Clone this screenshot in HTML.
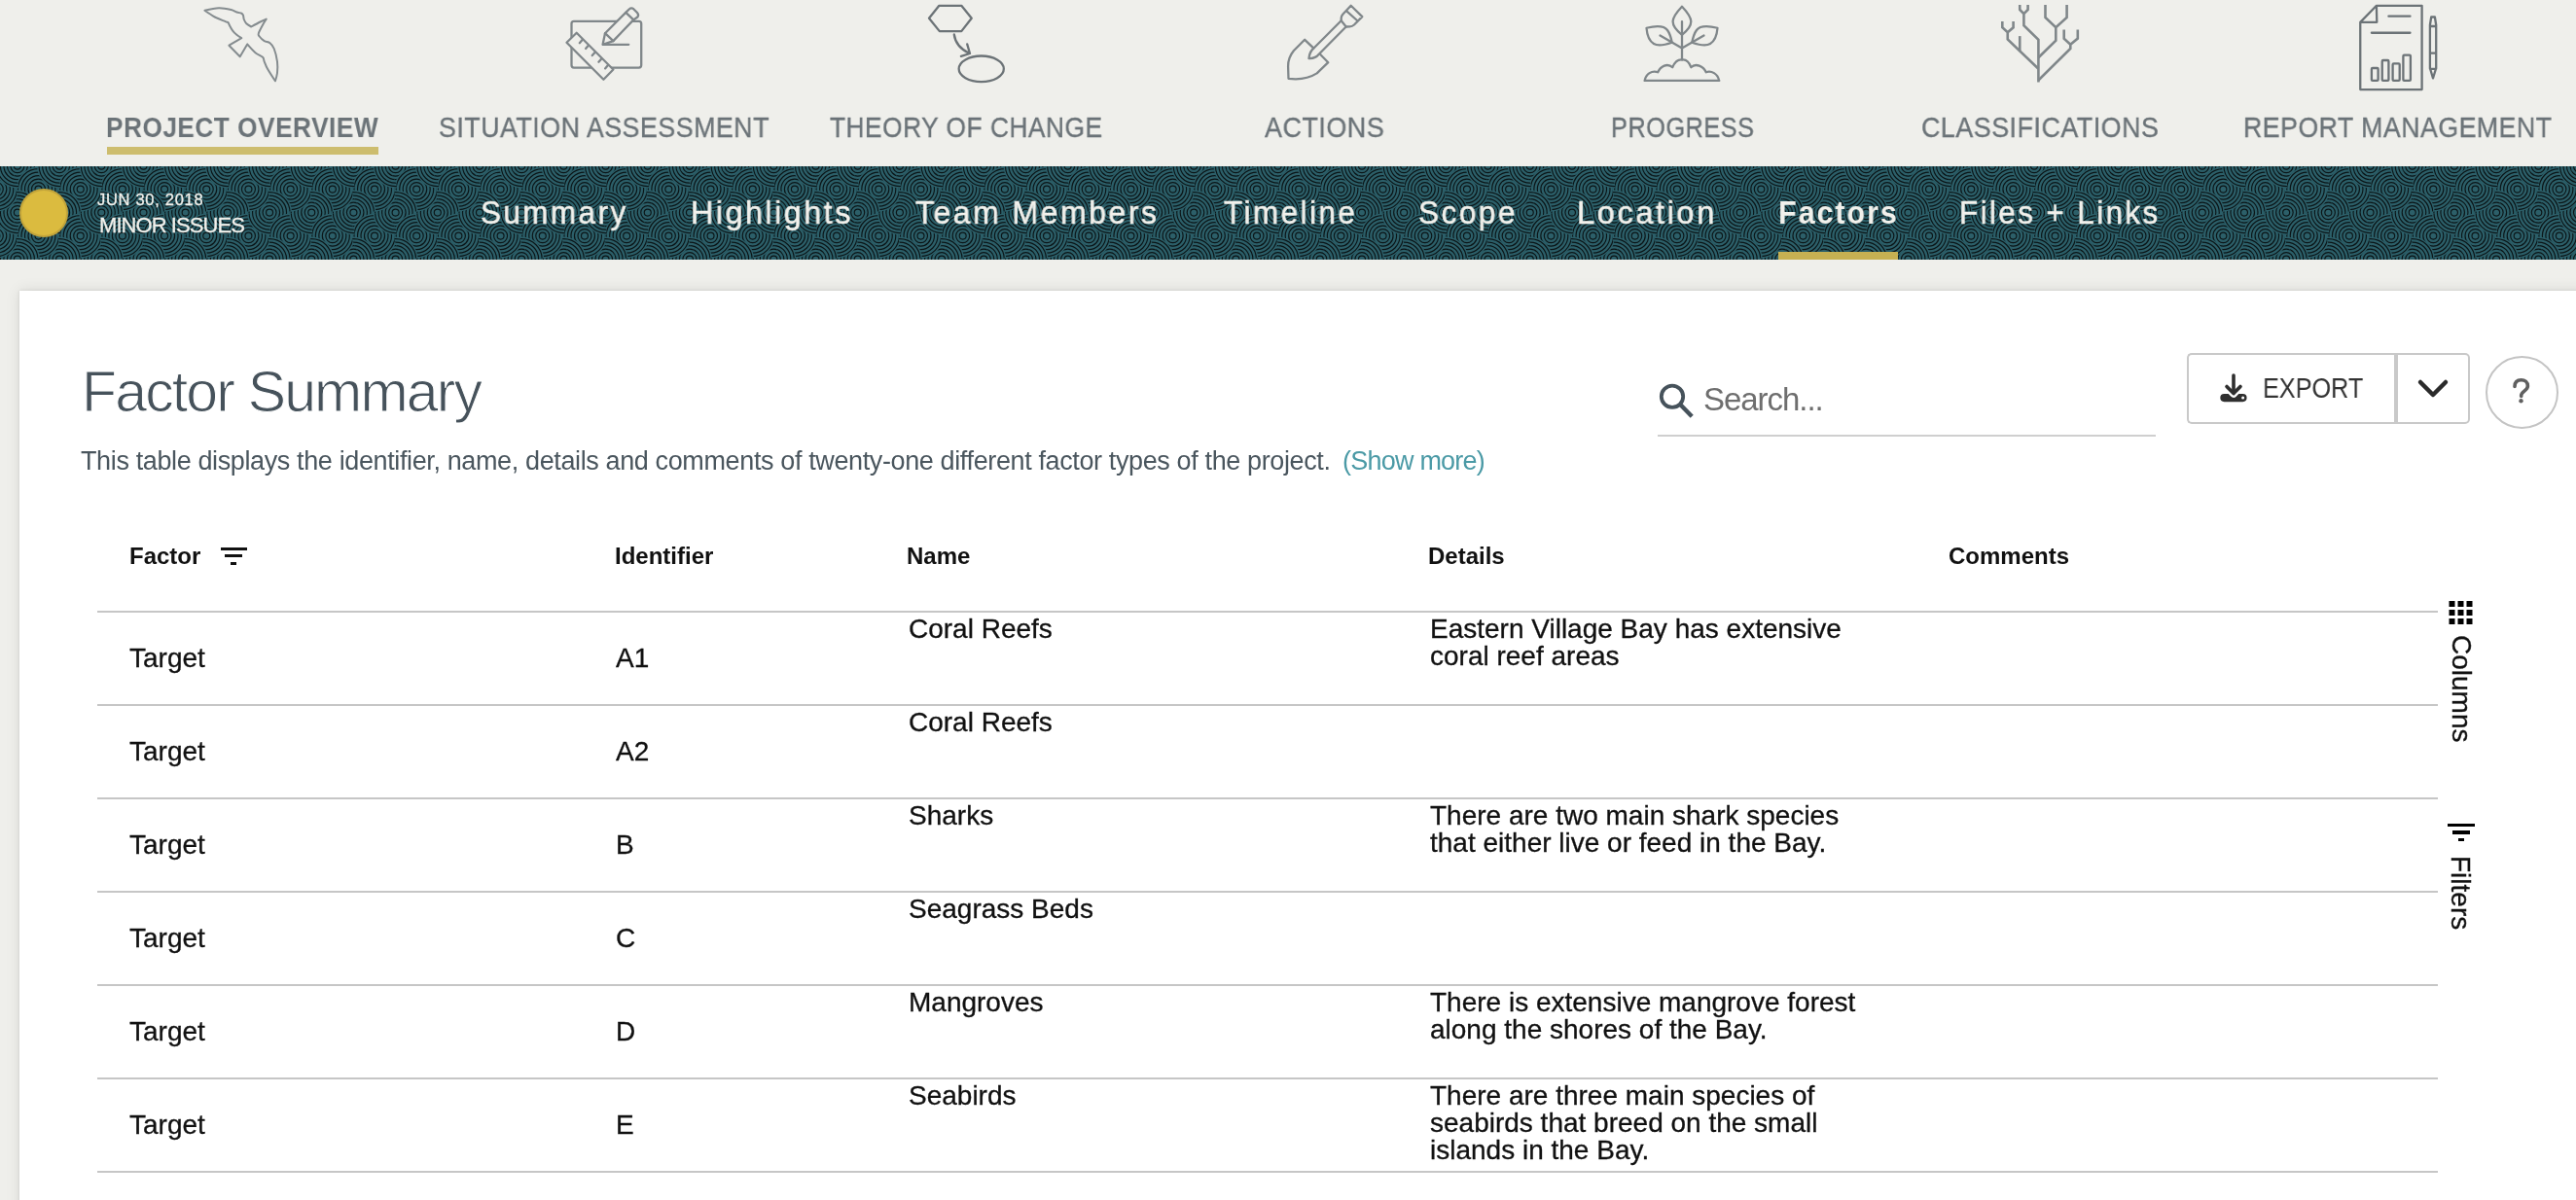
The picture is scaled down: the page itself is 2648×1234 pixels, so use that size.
<!DOCTYPE html>
<html><head><meta charset="utf-8">
<style>
html,body{margin:0;padding:0;}
body{width:2648px;height:1234px;overflow:hidden;position:relative;background:#efefeb;font-family:"Liberation Sans",sans-serif;}
.a{will-change:transform;}
.a{position:absolute;white-space:nowrap;}
.tl{font-size:29px;line-height:29px;color:#6b7378;top:116.5px;-webkit-text-stroke:0.35px #6b7378;}
.nv{font-size:33px;line-height:33px;color:#f2f1ec;top:201.7px;letter-spacing:2.5px;-webkit-text-stroke:0.5px #f2f1ec;transform-origin:0 0;}
.card{position:absolute;left:20px;top:299px;width:2700px;height:1000px;background:#fff;box-shadow:0 0 14px rgba(0,0,0,0.10), 0 0 3px rgba(0,0,0,0.10);}
.hd{font-size:24px;line-height:24px;font-weight:bold;color:#111;top:560px;}
.c{font-size:28px;line-height:28px;color:#111;-webkit-text-stroke:0.3px #111;}
.ln{position:absolute;left:100px;width:2406px;height:2px;background:#c6c6c6;}
</style></head><body>

<!-- top icons -->
<svg class="a" style="left:0;top:0" width="2648" height="100" viewBox="0 0 2648 100" fill="none" stroke="#80878a" stroke-width="2.3" stroke-linejoin="round" stroke-linecap="round">
<path stroke-width="2" stroke="#858c8f" d="M210.4,10.8 C210.40,10.80 220.48,8.43 225,8.3 C229.52,8.17 234.45,9.30 237.5,10 C240.55,10.70 241.50,11.88 243.3,12.5 C245.10,13.12 247.18,13.20 248.3,13.75 C249.42,14.30 249.58,14.76 250,15.8 C250.42,16.84 250.25,18.60 250.8,20 C251.35,21.40 252.05,22.95 253.3,24.2 C254.55,25.45 258.30,27.50 258.3,27.5 C258.30,27.50 264.93,23.82 267.5,22.5 C270.07,21.18 273.75,19.60 273.75,19.6 C273.75,19.60 272.12,21.77 270.8,24.2 C269.48,26.63 266.48,31.98 265.8,34.2 C265.12,36.42 265.72,36.18 266.7,37.5 C267.68,38.82 269.90,40.98 271.7,42.1 C273.50,43.22 275.83,42.88 277.5,44.2 C279.17,45.52 280.45,46.82 281.7,50 C282.95,53.18 284.45,59.13 285,63.3 C285.55,67.47 285.35,71.67 285,75 C284.65,78.33 282.90,83.30 282.9,83.3 C282.90,83.30 276.87,74.13 275,70.8 C273.13,67.47 272.53,65.31 271.7,63.3 C270.87,61.29 271.53,60.27 270,58.75 C268.47,57.23 265.13,56.43 262.5,54.2 C259.87,51.98 254.20,45.40 254.2,45.4 C254.20,45.40 246.70,58.30 246.7,58.3 C246.70,58.30 235.40,46.70 235.4,46.7 C235.40,46.70 248.30,39.20 248.3,39.2 C248.30,39.20 244.82,37.05 243.3,35.8 C241.78,34.55 240.45,33.37 239.2,31.7 C237.95,30.03 236.57,27.20 235.8,25.8 C235.03,24.40 235.28,23.92 234.6,23.3 C233.92,22.68 234.00,23.07 231.7,22.1 C229.40,21.13 224.35,19.38 220.8,17.5 C217.25,15.62 210.40,10.80 210.4,10.8 Z"/>
<rect x="587.5" y="21.8" width="71.7" height="47.8" rx="2.5"/>
<path d="M582.5,43.75 L592.7,33.75 L630.4,71.5 L620.4,81.7 Z" fill="#efefeb"/>
<path d="M598.75,40.8 L595.8,44.2 M604.6,47.1 L602.1,50 M611.7,53.75 L608.75,57.1 M618.3,60.4 L615.4,63.75 M625,67.1 L622.1,70.4"/>
<path d="M619.6,45.8 L622,34.2 L643.3,12.9 L646.7,9.5 Q649,7.5 651.25,9.2 L655,13 Q657,15.5 655.4,17.5 L651.25,20.4 L630.4,42.1 Z" fill="#efefeb"/>
<path d="M622,34.2 L630.4,42.1 M643.3,12.9 L651.25,20.4 M620,45.8 L646.25,45.8"/>
<g stroke="#6c7377">
<path d="M955,18.75 L965.4,5.8 L988.3,5.8 L998.75,18.75 L988.3,32.1 L965.8,32.1 Z"/>
<path d="M980.8,35.5 Q982.5,48.3 996.7,55 M994.2,45.4 L997,55 L987.9,57.9"/>
<ellipse cx="1008.75" cy="70.8" rx="23.1" ry="13.3"/>
</g>
<path d="M1349.9,49.2 L1341.2,40.8 L1330,52 C1325,58 1324,63 1324.1,68.3 L1324.5,80.8 C1338,82.5 1348,79 1353.7,75.4 L1365.3,64.2 L1357,55.8"/>
<path d="M1351,49 L1378.7,21.3 M1383.7,27.5 L1355.75,55.8 M1351,49 Q1346,53 1345.5,60 Q1352,60.5 1355.75,55.8"/>
<path d="M1378.7,21.3 L1378.7,18.5 Q1378.7,16.5 1380.5,14.5 L1388.7,5.8 L1400.3,17.1 L1392,25.5 Q1390,27.3 1387.5,27.4 L1383.7,27.5 Z M1384.5,11.7 L1395.3,21.25"/>
<path d="M1729,6.7 C1724,12 1719.6,17 1719.6,22.1 C1719.6,28 1724,32 1729,35.8 C1734,32 1738.3,28 1738.3,22.1 C1738.3,17 1734,12 1729,6.7 Z"/>
<path d="M1729,22.1 L1729,61.25 M1706.5,36.5 L1729,49.6 L1751.5,36.5"/>
<path d="M1692.5,28.75 C1700,27 1710,25.5 1714,31 C1717,35 1718,40 1718.75,43.75 C1712,46 1705,48 1700,45 C1695,42 1693,35 1692.5,28.75 Z"/>
<path d="M1765.5,28.75 C1758,27 1748,25.5 1744,31 C1741,35 1740,40 1739.25,43.75 C1746,46 1753,48 1758,45 C1763,42 1765,35 1765.5,28.75 Z"/>
<path d="M1690.6,82.9 L1767.3,82.9 M1690.6,82.9 C1692,76 1698,72 1704.2,74.2 C1707,68 1714,64.5 1719.2,69.2 C1722,63 1726,61 1729.2,61.5 C1733,61 1736,63 1738.3,69.2 C1743,64.5 1751,68 1753.75,74.2 C1759,72 1766,76 1767.1,82.9"/>
<g stroke-width="2.6" stroke-linecap="butt" stroke-linejoin="miter">
<path d="M2095.4,84.6 L2095.4,40.8 L2080.4,26.25 L2080.4,14.2 M2076.25,5 L2076.25,10 L2080.4,14.2 L2084.6,10 L2084.6,5"/>
<path d="M2095.4,70.8 L2063.75,40.4 L2063.75,33.3 M2058.3,22.1 L2058.3,28.3 L2063.75,33.3 L2069.6,28.3 L2069.6,22.1"/>
<path d="M2076.25,52 L2076.25,37.1"/>
<path d="M2095.4,59.2 L2113.3,41.7 L2113.3,28.3 M2102.5,5 L2102.5,17.9 L2113.3,28.3 L2124.6,17.9 L2124.6,5"/>
<path d="M2095.4,82.5 L2128.3,50 L2128.3,45.8 M2121.7,30.4 L2121.7,39.6 L2128.3,45.8 L2135.8,39.6 L2135.8,30.4"/>
</g>
<g stroke="#6c7377">
<path d="M2426.25,22.9 L2442.9,5.8 L2489.6,5.8 L2489.6,92.1 L2426.25,92.1 Z M2442.9,5.8 L2443.3,22.9 L2426.25,22.9"/>
<path d="M2455.4,16.7 L2477.5,16.7 M2437.9,33.75 L2477.5,33.75"/>
<rect x="2437.9" y="70" width="6.7" height="12.9" rx="1"/>
<rect x="2448.75" y="62" width="6.65" height="20.9" rx="1"/>
<rect x="2459.6" y="65.4" width="7.1" height="17.5" rx="1"/>
<rect x="2470.4" y="56.7" width="7.5" height="26.2" rx="1"/>
<path d="M2497.9,25.8 L2499.2,17.5 L2502.9,17.5 L2504.2,25.8 L2504.2,70 L2501,80.4 L2497.9,70 Z M2497.9,27 L2504.2,27 M2497.9,54.6 L2504.2,54.6 M2497.9,70.8 L2504.2,70.8"/>
</g>
</svg>

<!-- top labels -->
<div class="a tl" style="left:108.9px;font-weight:bold;-webkit-text-stroke:0;letter-spacing:0.6px;transform:scaleX(0.9023);transform-origin:0 0;">PROJECT OVERVIEW</div>
<div class="a" style="left:110px;top:151px;width:279px;height:8px;background:#cdbd6e;"></div>
<div class="a tl" style="left:451.1px;letter-spacing:0.6px;transform:scaleX(0.9208);transform-origin:0 0;">SITUATION ASSESSMENT</div>
<div class="a tl" style="left:853.1px;letter-spacing:0.6px;transform:scaleX(0.9052);transform-origin:0 0;">THEORY OF CHANGE</div>
<div class="a tl" style="left:1299.8px;letter-spacing:0.6px;transform:scaleX(0.9262);transform-origin:0 0;">ACTIONS</div>
<div class="a tl" style="left:1655.8px;letter-spacing:0.6px;transform:scaleX(0.8720);transform-origin:0 0;">PROGRESS</div>
<div class="a tl" style="left:1975.1px;letter-spacing:0.6px;transform:scaleX(0.9234);transform-origin:0 0;">CLASSIFICATIONS</div>
<div class="a tl" style="left:2306.2px;letter-spacing:0.6px;transform:scaleX(0.9181);transform-origin:0 0;">REPORT MANAGEMENT</div>

<!-- nav bar -->
<svg class="a" width="2648" height="96" viewBox="0 0 2648 96" style="left:0;top:171px;display:block"><defs><clipPath id="cl" clipPathUnits="userSpaceOnUse"><circle cx="21.595" cy="-24.0" r="23"/><circle cx="-21.595" cy="24.0" r="23"/></clipPath><g id="cf"><circle r="23" fill="#2c5f69"/><circle r="3.5" fill="none" stroke="#0b1517" stroke-width="1.15"/><circle r="7" fill="none" stroke="#0b1517" stroke-width="1.15"/><circle r="10.5" fill="none" stroke="#0b1517" stroke-width="1.15"/><circle r="14" fill="none" stroke="#0b1517" stroke-width="1.15"/><circle r="17.5" fill="none" stroke="#0b1517" stroke-width="1.15"/><circle r="21" fill="none" stroke="#0b1517" stroke-width="1.15"/></g><g id="cq" clip-path="url(#cl)"><use href="#cf"/></g></defs><rect width="2648" height="96" fill="#2c5f69"/><use href="#cf" x="-68.48" y="-48.4"/><use href="#cf" x="-25.29" y="-48.4"/><use href="#cf" x="17.9" y="-48.4"/><use href="#cf" x="61.09" y="-48.4"/><use href="#cf" x="104.28" y="-48.4"/><use href="#cf" x="147.47" y="-48.4"/><use href="#cf" x="190.66" y="-48.4"/><use href="#cf" x="233.85" y="-48.4"/><use href="#cf" x="277.04" y="-48.4"/><use href="#cf" x="320.23" y="-48.4"/><use href="#cf" x="363.42" y="-48.4"/><use href="#cf" x="406.61" y="-48.4"/><use href="#cf" x="449.8" y="-48.4"/><use href="#cf" x="492.99" y="-48.4"/><use href="#cf" x="536.18" y="-48.4"/><use href="#cf" x="579.37" y="-48.4"/><use href="#cf" x="622.56" y="-48.4"/><use href="#cf" x="665.75" y="-48.4"/><use href="#cf" x="708.94" y="-48.4"/><use href="#cf" x="752.13" y="-48.4"/><use href="#cf" x="795.32" y="-48.4"/><use href="#cf" x="838.51" y="-48.4"/><use href="#cf" x="881.7" y="-48.4"/><use href="#cf" x="924.89" y="-48.4"/><use href="#cf" x="968.08" y="-48.4"/><use href="#cf" x="1011.27" y="-48.4"/><use href="#cf" x="1054.46" y="-48.4"/><use href="#cf" x="1097.65" y="-48.4"/><use href="#cf" x="1140.84" y="-48.4"/><use href="#cf" x="1184.03" y="-48.4"/><use href="#cf" x="1227.22" y="-48.4"/><use href="#cf" x="1270.41" y="-48.4"/><use href="#cf" x="1313.6" y="-48.4"/><use href="#cf" x="1356.79" y="-48.4"/><use href="#cf" x="1399.98" y="-48.4"/><use href="#cf" x="1443.17" y="-48.4"/><use href="#cf" x="1486.36" y="-48.4"/><use href="#cf" x="1529.55" y="-48.4"/><use href="#cf" x="1572.74" y="-48.4"/><use href="#cf" x="1615.93" y="-48.4"/><use href="#cf" x="1659.12" y="-48.4"/><use href="#cf" x="1702.31" y="-48.4"/><use href="#cf" x="1745.5" y="-48.4"/><use href="#cf" x="1788.69" y="-48.4"/><use href="#cf" x="1831.88" y="-48.4"/><use href="#cf" x="1875.07" y="-48.4"/><use href="#cf" x="1918.26" y="-48.4"/><use href="#cf" x="1961.45" y="-48.4"/><use href="#cf" x="2004.64" y="-48.4"/><use href="#cf" x="2047.83" y="-48.4"/><use href="#cf" x="2091.02" y="-48.4"/><use href="#cf" x="2134.21" y="-48.4"/><use href="#cf" x="2177.4" y="-48.4"/><use href="#cf" x="2220.59" y="-48.4"/><use href="#cf" x="2263.78" y="-48.4"/><use href="#cf" x="2306.97" y="-48.4"/><use href="#cf" x="2350.16" y="-48.4"/><use href="#cf" x="2393.35" y="-48.4"/><use href="#cf" x="2436.54" y="-48.4"/><use href="#cf" x="2479.73" y="-48.4"/><use href="#cf" x="2522.92" y="-48.4"/><use href="#cf" x="2566.11" y="-48.4"/><use href="#cf" x="2609.3" y="-48.4"/><use href="#cf" x="2652.49" y="-48.4"/><use href="#cf" x="2695.68" y="-48.4"/><use href="#cf" x="2738.87" y="-48.4"/><use href="#cf" x="-68.48" y="-0.4"/><use href="#cf" x="-25.29" y="-0.4"/><use href="#cf" x="17.9" y="-0.4"/><use href="#cf" x="61.09" y="-0.4"/><use href="#cf" x="104.28" y="-0.4"/><use href="#cf" x="147.47" y="-0.4"/><use href="#cf" x="190.66" y="-0.4"/><use href="#cf" x="233.85" y="-0.4"/><use href="#cf" x="277.04" y="-0.4"/><use href="#cf" x="320.23" y="-0.4"/><use href="#cf" x="363.42" y="-0.4"/><use href="#cf" x="406.61" y="-0.4"/><use href="#cf" x="449.8" y="-0.4"/><use href="#cf" x="492.99" y="-0.4"/><use href="#cf" x="536.18" y="-0.4"/><use href="#cf" x="579.37" y="-0.4"/><use href="#cf" x="622.56" y="-0.4"/><use href="#cf" x="665.75" y="-0.4"/><use href="#cf" x="708.94" y="-0.4"/><use href="#cf" x="752.13" y="-0.4"/><use href="#cf" x="795.32" y="-0.4"/><use href="#cf" x="838.51" y="-0.4"/><use href="#cf" x="881.7" y="-0.4"/><use href="#cf" x="924.89" y="-0.4"/><use href="#cf" x="968.08" y="-0.4"/><use href="#cf" x="1011.27" y="-0.4"/><use href="#cf" x="1054.46" y="-0.4"/><use href="#cf" x="1097.65" y="-0.4"/><use href="#cf" x="1140.84" y="-0.4"/><use href="#cf" x="1184.03" y="-0.4"/><use href="#cf" x="1227.22" y="-0.4"/><use href="#cf" x="1270.41" y="-0.4"/><use href="#cf" x="1313.6" y="-0.4"/><use href="#cf" x="1356.79" y="-0.4"/><use href="#cf" x="1399.98" y="-0.4"/><use href="#cf" x="1443.17" y="-0.4"/><use href="#cf" x="1486.36" y="-0.4"/><use href="#cf" x="1529.55" y="-0.4"/><use href="#cf" x="1572.74" y="-0.4"/><use href="#cf" x="1615.93" y="-0.4"/><use href="#cf" x="1659.12" y="-0.4"/><use href="#cf" x="1702.31" y="-0.4"/><use href="#cf" x="1745.5" y="-0.4"/><use href="#cf" x="1788.69" y="-0.4"/><use href="#cf" x="1831.88" y="-0.4"/><use href="#cf" x="1875.07" y="-0.4"/><use href="#cf" x="1918.26" y="-0.4"/><use href="#cf" x="1961.45" y="-0.4"/><use href="#cf" x="2004.64" y="-0.4"/><use href="#cf" x="2047.83" y="-0.4"/><use href="#cf" x="2091.02" y="-0.4"/><use href="#cf" x="2134.21" y="-0.4"/><use href="#cf" x="2177.4" y="-0.4"/><use href="#cf" x="2220.59" y="-0.4"/><use href="#cf" x="2263.78" y="-0.4"/><use href="#cf" x="2306.97" y="-0.4"/><use href="#cf" x="2350.16" y="-0.4"/><use href="#cf" x="2393.35" y="-0.4"/><use href="#cf" x="2436.54" y="-0.4"/><use href="#cf" x="2479.73" y="-0.4"/><use href="#cf" x="2522.92" y="-0.4"/><use href="#cf" x="2566.11" y="-0.4"/><use href="#cf" x="2609.3" y="-0.4"/><use href="#cf" x="2652.49" y="-0.4"/><use href="#cf" x="2695.68" y="-0.4"/><use href="#cf" x="2738.87" y="-0.4"/><use href="#cf" x="-68.48" y="47.6"/><use href="#cf" x="-25.29" y="47.6"/><use href="#cf" x="17.9" y="47.6"/><use href="#cf" x="61.09" y="47.6"/><use href="#cf" x="104.28" y="47.6"/><use href="#cf" x="147.47" y="47.6"/><use href="#cf" x="190.66" y="47.6"/><use href="#cf" x="233.85" y="47.6"/><use href="#cf" x="277.04" y="47.6"/><use href="#cf" x="320.23" y="47.6"/><use href="#cf" x="363.42" y="47.6"/><use href="#cf" x="406.61" y="47.6"/><use href="#cf" x="449.8" y="47.6"/><use href="#cf" x="492.99" y="47.6"/><use href="#cf" x="536.18" y="47.6"/><use href="#cf" x="579.37" y="47.6"/><use href="#cf" x="622.56" y="47.6"/><use href="#cf" x="665.75" y="47.6"/><use href="#cf" x="708.94" y="47.6"/><use href="#cf" x="752.13" y="47.6"/><use href="#cf" x="795.32" y="47.6"/><use href="#cf" x="838.51" y="47.6"/><use href="#cf" x="881.7" y="47.6"/><use href="#cf" x="924.89" y="47.6"/><use href="#cf" x="968.08" y="47.6"/><use href="#cf" x="1011.27" y="47.6"/><use href="#cf" x="1054.46" y="47.6"/><use href="#cf" x="1097.65" y="47.6"/><use href="#cf" x="1140.84" y="47.6"/><use href="#cf" x="1184.03" y="47.6"/><use href="#cf" x="1227.22" y="47.6"/><use href="#cf" x="1270.41" y="47.6"/><use href="#cf" x="1313.6" y="47.6"/><use href="#cf" x="1356.79" y="47.6"/><use href="#cf" x="1399.98" y="47.6"/><use href="#cf" x="1443.17" y="47.6"/><use href="#cf" x="1486.36" y="47.6"/><use href="#cf" x="1529.55" y="47.6"/><use href="#cf" x="1572.74" y="47.6"/><use href="#cf" x="1615.93" y="47.6"/><use href="#cf" x="1659.12" y="47.6"/><use href="#cf" x="1702.31" y="47.6"/><use href="#cf" x="1745.5" y="47.6"/><use href="#cf" x="1788.69" y="47.6"/><use href="#cf" x="1831.88" y="47.6"/><use href="#cf" x="1875.07" y="47.6"/><use href="#cf" x="1918.26" y="47.6"/><use href="#cf" x="1961.45" y="47.6"/><use href="#cf" x="2004.64" y="47.6"/><use href="#cf" x="2047.83" y="47.6"/><use href="#cf" x="2091.02" y="47.6"/><use href="#cf" x="2134.21" y="47.6"/><use href="#cf" x="2177.4" y="47.6"/><use href="#cf" x="2220.59" y="47.6"/><use href="#cf" x="2263.78" y="47.6"/><use href="#cf" x="2306.97" y="47.6"/><use href="#cf" x="2350.16" y="47.6"/><use href="#cf" x="2393.35" y="47.6"/><use href="#cf" x="2436.54" y="47.6"/><use href="#cf" x="2479.73" y="47.6"/><use href="#cf" x="2522.92" y="47.6"/><use href="#cf" x="2566.11" y="47.6"/><use href="#cf" x="2609.3" y="47.6"/><use href="#cf" x="2652.49" y="47.6"/><use href="#cf" x="2695.68" y="47.6"/><use href="#cf" x="2738.87" y="47.6"/><use href="#cf" x="-68.48" y="95.6"/><use href="#cf" x="-25.29" y="95.6"/><use href="#cf" x="17.9" y="95.6"/><use href="#cf" x="61.09" y="95.6"/><use href="#cf" x="104.28" y="95.6"/><use href="#cf" x="147.47" y="95.6"/><use href="#cf" x="190.66" y="95.6"/><use href="#cf" x="233.85" y="95.6"/><use href="#cf" x="277.04" y="95.6"/><use href="#cf" x="320.23" y="95.6"/><use href="#cf" x="363.42" y="95.6"/><use href="#cf" x="406.61" y="95.6"/><use href="#cf" x="449.8" y="95.6"/><use href="#cf" x="492.99" y="95.6"/><use href="#cf" x="536.18" y="95.6"/><use href="#cf" x="579.37" y="95.6"/><use href="#cf" x="622.56" y="95.6"/><use href="#cf" x="665.75" y="95.6"/><use href="#cf" x="708.94" y="95.6"/><use href="#cf" x="752.13" y="95.6"/><use href="#cf" x="795.32" y="95.6"/><use href="#cf" x="838.51" y="95.6"/><use href="#cf" x="881.7" y="95.6"/><use href="#cf" x="924.89" y="95.6"/><use href="#cf" x="968.08" y="95.6"/><use href="#cf" x="1011.27" y="95.6"/><use href="#cf" x="1054.46" y="95.6"/><use href="#cf" x="1097.65" y="95.6"/><use href="#cf" x="1140.84" y="95.6"/><use href="#cf" x="1184.03" y="95.6"/><use href="#cf" x="1227.22" y="95.6"/><use href="#cf" x="1270.41" y="95.6"/><use href="#cf" x="1313.6" y="95.6"/><use href="#cf" x="1356.79" y="95.6"/><use href="#cf" x="1399.98" y="95.6"/><use href="#cf" x="1443.17" y="95.6"/><use href="#cf" x="1486.36" y="95.6"/><use href="#cf" x="1529.55" y="95.6"/><use href="#cf" x="1572.74" y="95.6"/><use href="#cf" x="1615.93" y="95.6"/><use href="#cf" x="1659.12" y="95.6"/><use href="#cf" x="1702.31" y="95.6"/><use href="#cf" x="1745.5" y="95.6"/><use href="#cf" x="1788.69" y="95.6"/><use href="#cf" x="1831.88" y="95.6"/><use href="#cf" x="1875.07" y="95.6"/><use href="#cf" x="1918.26" y="95.6"/><use href="#cf" x="1961.45" y="95.6"/><use href="#cf" x="2004.64" y="95.6"/><use href="#cf" x="2047.83" y="95.6"/><use href="#cf" x="2091.02" y="95.6"/><use href="#cf" x="2134.21" y="95.6"/><use href="#cf" x="2177.4" y="95.6"/><use href="#cf" x="2220.59" y="95.6"/><use href="#cf" x="2263.78" y="95.6"/><use href="#cf" x="2306.97" y="95.6"/><use href="#cf" x="2350.16" y="95.6"/><use href="#cf" x="2393.35" y="95.6"/><use href="#cf" x="2436.54" y="95.6"/><use href="#cf" x="2479.73" y="95.6"/><use href="#cf" x="2522.92" y="95.6"/><use href="#cf" x="2566.11" y="95.6"/><use href="#cf" x="2609.3" y="95.6"/><use href="#cf" x="2652.49" y="95.6"/><use href="#cf" x="2695.68" y="95.6"/><use href="#cf" x="2738.87" y="95.6"/><use href="#cf" x="-68.48" y="143.6"/><use href="#cf" x="-25.29" y="143.6"/><use href="#cf" x="17.9" y="143.6"/><use href="#cf" x="61.09" y="143.6"/><use href="#cf" x="104.28" y="143.6"/><use href="#cf" x="147.47" y="143.6"/><use href="#cf" x="190.66" y="143.6"/><use href="#cf" x="233.85" y="143.6"/><use href="#cf" x="277.04" y="143.6"/><use href="#cf" x="320.23" y="143.6"/><use href="#cf" x="363.42" y="143.6"/><use href="#cf" x="406.61" y="143.6"/><use href="#cf" x="449.8" y="143.6"/><use href="#cf" x="492.99" y="143.6"/><use href="#cf" x="536.18" y="143.6"/><use href="#cf" x="579.37" y="143.6"/><use href="#cf" x="622.56" y="143.6"/><use href="#cf" x="665.75" y="143.6"/><use href="#cf" x="708.94" y="143.6"/><use href="#cf" x="752.13" y="143.6"/><use href="#cf" x="795.32" y="143.6"/><use href="#cf" x="838.51" y="143.6"/><use href="#cf" x="881.7" y="143.6"/><use href="#cf" x="924.89" y="143.6"/><use href="#cf" x="968.08" y="143.6"/><use href="#cf" x="1011.27" y="143.6"/><use href="#cf" x="1054.46" y="143.6"/><use href="#cf" x="1097.65" y="143.6"/><use href="#cf" x="1140.84" y="143.6"/><use href="#cf" x="1184.03" y="143.6"/><use href="#cf" x="1227.22" y="143.6"/><use href="#cf" x="1270.41" y="143.6"/><use href="#cf" x="1313.6" y="143.6"/><use href="#cf" x="1356.79" y="143.6"/><use href="#cf" x="1399.98" y="143.6"/><use href="#cf" x="1443.17" y="143.6"/><use href="#cf" x="1486.36" y="143.6"/><use href="#cf" x="1529.55" y="143.6"/><use href="#cf" x="1572.74" y="143.6"/><use href="#cf" x="1615.93" y="143.6"/><use href="#cf" x="1659.12" y="143.6"/><use href="#cf" x="1702.31" y="143.6"/><use href="#cf" x="1745.5" y="143.6"/><use href="#cf" x="1788.69" y="143.6"/><use href="#cf" x="1831.88" y="143.6"/><use href="#cf" x="1875.07" y="143.6"/><use href="#cf" x="1918.26" y="143.6"/><use href="#cf" x="1961.45" y="143.6"/><use href="#cf" x="2004.64" y="143.6"/><use href="#cf" x="2047.83" y="143.6"/><use href="#cf" x="2091.02" y="143.6"/><use href="#cf" x="2134.21" y="143.6"/><use href="#cf" x="2177.4" y="143.6"/><use href="#cf" x="2220.59" y="143.6"/><use href="#cf" x="2263.78" y="143.6"/><use href="#cf" x="2306.97" y="143.6"/><use href="#cf" x="2350.16" y="143.6"/><use href="#cf" x="2393.35" y="143.6"/><use href="#cf" x="2436.54" y="143.6"/><use href="#cf" x="2479.73" y="143.6"/><use href="#cf" x="2522.92" y="143.6"/><use href="#cf" x="2566.11" y="143.6"/><use href="#cf" x="2609.3" y="143.6"/><use href="#cf" x="2652.49" y="143.6"/><use href="#cf" x="2695.68" y="143.6"/><use href="#cf" x="2738.87" y="143.6"/><use href="#cf" x="-46.88" y="-24.4"/><use href="#cf" x="-3.7" y="-24.4"/><use href="#cf" x="39.49" y="-24.4"/><use href="#cf" x="82.69" y="-24.4"/><use href="#cf" x="125.88" y="-24.4"/><use href="#cf" x="169.06" y="-24.4"/><use href="#cf" x="212.25" y="-24.4"/><use href="#cf" x="255.44" y="-24.4"/><use href="#cf" x="298.63" y="-24.4"/><use href="#cf" x="341.82" y="-24.4"/><use href="#cf" x="385.01" y="-24.4"/><use href="#cf" x="428.2" y="-24.4"/><use href="#cf" x="471.39" y="-24.4"/><use href="#cf" x="514.58" y="-24.4"/><use href="#cf" x="557.77" y="-24.4"/><use href="#cf" x="600.97" y="-24.4"/><use href="#cf" x="644.15" y="-24.4"/><use href="#cf" x="687.34" y="-24.4"/><use href="#cf" x="730.53" y="-24.4"/><use href="#cf" x="773.73" y="-24.4"/><use href="#cf" x="816.91" y="-24.4"/><use href="#cf" x="860.1" y="-24.4"/><use href="#cf" x="903.29" y="-24.4"/><use href="#cf" x="946.49" y="-24.4"/><use href="#cf" x="989.67" y="-24.4"/><use href="#cf" x="1032.86" y="-24.4"/><use href="#cf" x="1076.05" y="-24.4"/><use href="#cf" x="1119.24" y="-24.4"/><use href="#cf" x="1162.43" y="-24.4"/><use href="#cf" x="1205.62" y="-24.4"/><use href="#cf" x="1248.81" y="-24.4"/><use href="#cf" x="1292" y="-24.4"/><use href="#cf" x="1335.19" y="-24.4"/><use href="#cf" x="1378.38" y="-24.4"/><use href="#cf" x="1421.57" y="-24.4"/><use href="#cf" x="1464.76" y="-24.4"/><use href="#cf" x="1507.95" y="-24.4"/><use href="#cf" x="1551.14" y="-24.4"/><use href="#cf" x="1594.33" y="-24.4"/><use href="#cf" x="1637.52" y="-24.4"/><use href="#cf" x="1680.71" y="-24.4"/><use href="#cf" x="1723.9" y="-24.4"/><use href="#cf" x="1767.09" y="-24.4"/><use href="#cf" x="1810.28" y="-24.4"/><use href="#cf" x="1853.47" y="-24.4"/><use href="#cf" x="1896.66" y="-24.4"/><use href="#cf" x="1939.85" y="-24.4"/><use href="#cf" x="1983.04" y="-24.4"/><use href="#cf" x="2026.23" y="-24.4"/><use href="#cf" x="2069.42" y="-24.4"/><use href="#cf" x="2112.61" y="-24.4"/><use href="#cf" x="2155.8" y="-24.4"/><use href="#cf" x="2198.99" y="-24.4"/><use href="#cf" x="2242.18" y="-24.4"/><use href="#cf" x="2285.38" y="-24.4"/><use href="#cf" x="2328.56" y="-24.4"/><use href="#cf" x="2371.75" y="-24.4"/><use href="#cf" x="2414.94" y="-24.4"/><use href="#cf" x="2458.13" y="-24.4"/><use href="#cf" x="2501.32" y="-24.4"/><use href="#cf" x="2544.51" y="-24.4"/><use href="#cf" x="2587.7" y="-24.4"/><use href="#cf" x="2630.89" y="-24.4"/><use href="#cf" x="2674.08" y="-24.4"/><use href="#cf" x="2717.27" y="-24.4"/><use href="#cf" x="2760.46" y="-24.4"/><use href="#cf" x="-46.88" y="23.6"/><use href="#cf" x="-3.7" y="23.6"/><use href="#cf" x="39.49" y="23.6"/><use href="#cf" x="82.69" y="23.6"/><use href="#cf" x="125.88" y="23.6"/><use href="#cf" x="169.06" y="23.6"/><use href="#cf" x="212.25" y="23.6"/><use href="#cf" x="255.44" y="23.6"/><use href="#cf" x="298.63" y="23.6"/><use href="#cf" x="341.82" y="23.6"/><use href="#cf" x="385.01" y="23.6"/><use href="#cf" x="428.2" y="23.6"/><use href="#cf" x="471.39" y="23.6"/><use href="#cf" x="514.58" y="23.6"/><use href="#cf" x="557.77" y="23.6"/><use href="#cf" x="600.97" y="23.6"/><use href="#cf" x="644.15" y="23.6"/><use href="#cf" x="687.34" y="23.6"/><use href="#cf" x="730.53" y="23.6"/><use href="#cf" x="773.73" y="23.6"/><use href="#cf" x="816.91" y="23.6"/><use href="#cf" x="860.1" y="23.6"/><use href="#cf" x="903.29" y="23.6"/><use href="#cf" x="946.49" y="23.6"/><use href="#cf" x="989.67" y="23.6"/><use href="#cf" x="1032.86" y="23.6"/><use href="#cf" x="1076.05" y="23.6"/><use href="#cf" x="1119.24" y="23.6"/><use href="#cf" x="1162.43" y="23.6"/><use href="#cf" x="1205.62" y="23.6"/><use href="#cf" x="1248.81" y="23.6"/><use href="#cf" x="1292" y="23.6"/><use href="#cf" x="1335.19" y="23.6"/><use href="#cf" x="1378.38" y="23.6"/><use href="#cf" x="1421.57" y="23.6"/><use href="#cf" x="1464.76" y="23.6"/><use href="#cf" x="1507.95" y="23.6"/><use href="#cf" x="1551.14" y="23.6"/><use href="#cf" x="1594.33" y="23.6"/><use href="#cf" x="1637.52" y="23.6"/><use href="#cf" x="1680.71" y="23.6"/><use href="#cf" x="1723.9" y="23.6"/><use href="#cf" x="1767.09" y="23.6"/><use href="#cf" x="1810.28" y="23.6"/><use href="#cf" x="1853.47" y="23.6"/><use href="#cf" x="1896.66" y="23.6"/><use href="#cf" x="1939.85" y="23.6"/><use href="#cf" x="1983.04" y="23.6"/><use href="#cf" x="2026.23" y="23.6"/><use href="#cf" x="2069.42" y="23.6"/><use href="#cf" x="2112.61" y="23.6"/><use href="#cf" x="2155.8" y="23.6"/><use href="#cf" x="2198.99" y="23.6"/><use href="#cf" x="2242.18" y="23.6"/><use href="#cf" x="2285.38" y="23.6"/><use href="#cf" x="2328.56" y="23.6"/><use href="#cf" x="2371.75" y="23.6"/><use href="#cf" x="2414.94" y="23.6"/><use href="#cf" x="2458.13" y="23.6"/><use href="#cf" x="2501.32" y="23.6"/><use href="#cf" x="2544.51" y="23.6"/><use href="#cf" x="2587.7" y="23.6"/><use href="#cf" x="2630.89" y="23.6"/><use href="#cf" x="2674.08" y="23.6"/><use href="#cf" x="2717.27" y="23.6"/><use href="#cf" x="2760.46" y="23.6"/><use href="#cf" x="-46.88" y="71.6"/><use href="#cf" x="-3.7" y="71.6"/><use href="#cf" x="39.49" y="71.6"/><use href="#cf" x="82.69" y="71.6"/><use href="#cf" x="125.88" y="71.6"/><use href="#cf" x="169.06" y="71.6"/><use href="#cf" x="212.25" y="71.6"/><use href="#cf" x="255.44" y="71.6"/><use href="#cf" x="298.63" y="71.6"/><use href="#cf" x="341.82" y="71.6"/><use href="#cf" x="385.01" y="71.6"/><use href="#cf" x="428.2" y="71.6"/><use href="#cf" x="471.39" y="71.6"/><use href="#cf" x="514.58" y="71.6"/><use href="#cf" x="557.77" y="71.6"/><use href="#cf" x="600.97" y="71.6"/><use href="#cf" x="644.15" y="71.6"/><use href="#cf" x="687.34" y="71.6"/><use href="#cf" x="730.53" y="71.6"/><use href="#cf" x="773.73" y="71.6"/><use href="#cf" x="816.91" y="71.6"/><use href="#cf" x="860.1" y="71.6"/><use href="#cf" x="903.29" y="71.6"/><use href="#cf" x="946.49" y="71.6"/><use href="#cf" x="989.67" y="71.6"/><use href="#cf" x="1032.86" y="71.6"/><use href="#cf" x="1076.05" y="71.6"/><use href="#cf" x="1119.24" y="71.6"/><use href="#cf" x="1162.43" y="71.6"/><use href="#cf" x="1205.62" y="71.6"/><use href="#cf" x="1248.81" y="71.6"/><use href="#cf" x="1292" y="71.6"/><use href="#cf" x="1335.19" y="71.6"/><use href="#cf" x="1378.38" y="71.6"/><use href="#cf" x="1421.57" y="71.6"/><use href="#cf" x="1464.76" y="71.6"/><use href="#cf" x="1507.95" y="71.6"/><use href="#cf" x="1551.14" y="71.6"/><use href="#cf" x="1594.33" y="71.6"/><use href="#cf" x="1637.52" y="71.6"/><use href="#cf" x="1680.71" y="71.6"/><use href="#cf" x="1723.9" y="71.6"/><use href="#cf" x="1767.09" y="71.6"/><use href="#cf" x="1810.28" y="71.6"/><use href="#cf" x="1853.47" y="71.6"/><use href="#cf" x="1896.66" y="71.6"/><use href="#cf" x="1939.85" y="71.6"/><use href="#cf" x="1983.04" y="71.6"/><use href="#cf" x="2026.23" y="71.6"/><use href="#cf" x="2069.42" y="71.6"/><use href="#cf" x="2112.61" y="71.6"/><use href="#cf" x="2155.8" y="71.6"/><use href="#cf" x="2198.99" y="71.6"/><use href="#cf" x="2242.18" y="71.6"/><use href="#cf" x="2285.38" y="71.6"/><use href="#cf" x="2328.56" y="71.6"/><use href="#cf" x="2371.75" y="71.6"/><use href="#cf" x="2414.94" y="71.6"/><use href="#cf" x="2458.13" y="71.6"/><use href="#cf" x="2501.32" y="71.6"/><use href="#cf" x="2544.51" y="71.6"/><use href="#cf" x="2587.7" y="71.6"/><use href="#cf" x="2630.89" y="71.6"/><use href="#cf" x="2674.08" y="71.6"/><use href="#cf" x="2717.27" y="71.6"/><use href="#cf" x="2760.46" y="71.6"/><use href="#cf" x="-46.88" y="119.6"/><use href="#cf" x="-3.7" y="119.6"/><use href="#cf" x="39.49" y="119.6"/><use href="#cf" x="82.69" y="119.6"/><use href="#cf" x="125.88" y="119.6"/><use href="#cf" x="169.06" y="119.6"/><use href="#cf" x="212.25" y="119.6"/><use href="#cf" x="255.44" y="119.6"/><use href="#cf" x="298.63" y="119.6"/><use href="#cf" x="341.82" y="119.6"/><use href="#cf" x="385.01" y="119.6"/><use href="#cf" x="428.2" y="119.6"/><use href="#cf" x="471.39" y="119.6"/><use href="#cf" x="514.58" y="119.6"/><use href="#cf" x="557.77" y="119.6"/><use href="#cf" x="600.97" y="119.6"/><use href="#cf" x="644.15" y="119.6"/><use href="#cf" x="687.34" y="119.6"/><use href="#cf" x="730.53" y="119.6"/><use href="#cf" x="773.73" y="119.6"/><use href="#cf" x="816.91" y="119.6"/><use href="#cf" x="860.1" y="119.6"/><use href="#cf" x="903.29" y="119.6"/><use href="#cf" x="946.49" y="119.6"/><use href="#cf" x="989.67" y="119.6"/><use href="#cf" x="1032.86" y="119.6"/><use href="#cf" x="1076.05" y="119.6"/><use href="#cf" x="1119.24" y="119.6"/><use href="#cf" x="1162.43" y="119.6"/><use href="#cf" x="1205.62" y="119.6"/><use href="#cf" x="1248.81" y="119.6"/><use href="#cf" x="1292" y="119.6"/><use href="#cf" x="1335.19" y="119.6"/><use href="#cf" x="1378.38" y="119.6"/><use href="#cf" x="1421.57" y="119.6"/><use href="#cf" x="1464.76" y="119.6"/><use href="#cf" x="1507.95" y="119.6"/><use href="#cf" x="1551.14" y="119.6"/><use href="#cf" x="1594.33" y="119.6"/><use href="#cf" x="1637.52" y="119.6"/><use href="#cf" x="1680.71" y="119.6"/><use href="#cf" x="1723.9" y="119.6"/><use href="#cf" x="1767.09" y="119.6"/><use href="#cf" x="1810.28" y="119.6"/><use href="#cf" x="1853.47" y="119.6"/><use href="#cf" x="1896.66" y="119.6"/><use href="#cf" x="1939.85" y="119.6"/><use href="#cf" x="1983.04" y="119.6"/><use href="#cf" x="2026.23" y="119.6"/><use href="#cf" x="2069.42" y="119.6"/><use href="#cf" x="2112.61" y="119.6"/><use href="#cf" x="2155.8" y="119.6"/><use href="#cf" x="2198.99" y="119.6"/><use href="#cf" x="2242.18" y="119.6"/><use href="#cf" x="2285.38" y="119.6"/><use href="#cf" x="2328.56" y="119.6"/><use href="#cf" x="2371.75" y="119.6"/><use href="#cf" x="2414.94" y="119.6"/><use href="#cf" x="2458.13" y="119.6"/><use href="#cf" x="2501.32" y="119.6"/><use href="#cf" x="2544.51" y="119.6"/><use href="#cf" x="2587.7" y="119.6"/><use href="#cf" x="2630.89" y="119.6"/><use href="#cf" x="2674.08" y="119.6"/><use href="#cf" x="2717.27" y="119.6"/><use href="#cf" x="2760.46" y="119.6"/><use href="#cf" x="-46.88" y="167.6"/><use href="#cf" x="-3.7" y="167.6"/><use href="#cf" x="39.49" y="167.6"/><use href="#cf" x="82.69" y="167.6"/><use href="#cf" x="125.88" y="167.6"/><use href="#cf" x="169.06" y="167.6"/><use href="#cf" x="212.25" y="167.6"/><use href="#cf" x="255.44" y="167.6"/><use href="#cf" x="298.63" y="167.6"/><use href="#cf" x="341.82" y="167.6"/><use href="#cf" x="385.01" y="167.6"/><use href="#cf" x="428.2" y="167.6"/><use href="#cf" x="471.39" y="167.6"/><use href="#cf" x="514.58" y="167.6"/><use href="#cf" x="557.77" y="167.6"/><use href="#cf" x="600.97" y="167.6"/><use href="#cf" x="644.15" y="167.6"/><use href="#cf" x="687.34" y="167.6"/><use href="#cf" x="730.53" y="167.6"/><use href="#cf" x="773.73" y="167.6"/><use href="#cf" x="816.91" y="167.6"/><use href="#cf" x="860.1" y="167.6"/><use href="#cf" x="903.29" y="167.6"/><use href="#cf" x="946.49" y="167.6"/><use href="#cf" x="989.67" y="167.6"/><use href="#cf" x="1032.86" y="167.6"/><use href="#cf" x="1076.05" y="167.6"/><use href="#cf" x="1119.24" y="167.6"/><use href="#cf" x="1162.43" y="167.6"/><use href="#cf" x="1205.62" y="167.6"/><use href="#cf" x="1248.81" y="167.6"/><use href="#cf" x="1292" y="167.6"/><use href="#cf" x="1335.19" y="167.6"/><use href="#cf" x="1378.38" y="167.6"/><use href="#cf" x="1421.57" y="167.6"/><use href="#cf" x="1464.76" y="167.6"/><use href="#cf" x="1507.95" y="167.6"/><use href="#cf" x="1551.14" y="167.6"/><use href="#cf" x="1594.33" y="167.6"/><use href="#cf" x="1637.52" y="167.6"/><use href="#cf" x="1680.71" y="167.6"/><use href="#cf" x="1723.9" y="167.6"/><use href="#cf" x="1767.09" y="167.6"/><use href="#cf" x="1810.28" y="167.6"/><use href="#cf" x="1853.47" y="167.6"/><use href="#cf" x="1896.66" y="167.6"/><use href="#cf" x="1939.85" y="167.6"/><use href="#cf" x="1983.04" y="167.6"/><use href="#cf" x="2026.23" y="167.6"/><use href="#cf" x="2069.42" y="167.6"/><use href="#cf" x="2112.61" y="167.6"/><use href="#cf" x="2155.8" y="167.6"/><use href="#cf" x="2198.99" y="167.6"/><use href="#cf" x="2242.18" y="167.6"/><use href="#cf" x="2285.38" y="167.6"/><use href="#cf" x="2328.56" y="167.6"/><use href="#cf" x="2371.75" y="167.6"/><use href="#cf" x="2414.94" y="167.6"/><use href="#cf" x="2458.13" y="167.6"/><use href="#cf" x="2501.32" y="167.6"/><use href="#cf" x="2544.51" y="167.6"/><use href="#cf" x="2587.7" y="167.6"/><use href="#cf" x="2630.89" y="167.6"/><use href="#cf" x="2674.08" y="167.6"/><use href="#cf" x="2717.27" y="167.6"/><use href="#cf" x="2760.46" y="167.6"/><use href="#cq" x="-68.48" y="-48.4"/><use href="#cq" x="-25.29" y="-48.4"/><use href="#cq" x="17.9" y="-48.4"/><use href="#cq" x="61.09" y="-48.4"/><use href="#cq" x="104.28" y="-48.4"/><use href="#cq" x="147.47" y="-48.4"/><use href="#cq" x="190.66" y="-48.4"/><use href="#cq" x="233.85" y="-48.4"/><use href="#cq" x="277.04" y="-48.4"/><use href="#cq" x="320.23" y="-48.4"/><use href="#cq" x="363.42" y="-48.4"/><use href="#cq" x="406.61" y="-48.4"/><use href="#cq" x="449.8" y="-48.4"/><use href="#cq" x="492.99" y="-48.4"/><use href="#cq" x="536.18" y="-48.4"/><use href="#cq" x="579.37" y="-48.4"/><use href="#cq" x="622.56" y="-48.4"/><use href="#cq" x="665.75" y="-48.4"/><use href="#cq" x="708.94" y="-48.4"/><use href="#cq" x="752.13" y="-48.4"/><use href="#cq" x="795.32" y="-48.4"/><use href="#cq" x="838.51" y="-48.4"/><use href="#cq" x="881.7" y="-48.4"/><use href="#cq" x="924.89" y="-48.4"/><use href="#cq" x="968.08" y="-48.4"/><use href="#cq" x="1011.27" y="-48.4"/><use href="#cq" x="1054.46" y="-48.4"/><use href="#cq" x="1097.65" y="-48.4"/><use href="#cq" x="1140.84" y="-48.4"/><use href="#cq" x="1184.03" y="-48.4"/><use href="#cq" x="1227.22" y="-48.4"/><use href="#cq" x="1270.41" y="-48.4"/><use href="#cq" x="1313.6" y="-48.4"/><use href="#cq" x="1356.79" y="-48.4"/><use href="#cq" x="1399.98" y="-48.4"/><use href="#cq" x="1443.17" y="-48.4"/><use href="#cq" x="1486.36" y="-48.4"/><use href="#cq" x="1529.55" y="-48.4"/><use href="#cq" x="1572.74" y="-48.4"/><use href="#cq" x="1615.93" y="-48.4"/><use href="#cq" x="1659.12" y="-48.4"/><use href="#cq" x="1702.31" y="-48.4"/><use href="#cq" x="1745.5" y="-48.4"/><use href="#cq" x="1788.69" y="-48.4"/><use href="#cq" x="1831.88" y="-48.4"/><use href="#cq" x="1875.07" y="-48.4"/><use href="#cq" x="1918.26" y="-48.4"/><use href="#cq" x="1961.45" y="-48.4"/><use href="#cq" x="2004.64" y="-48.4"/><use href="#cq" x="2047.83" y="-48.4"/><use href="#cq" x="2091.02" y="-48.4"/><use href="#cq" x="2134.21" y="-48.4"/><use href="#cq" x="2177.4" y="-48.4"/><use href="#cq" x="2220.59" y="-48.4"/><use href="#cq" x="2263.78" y="-48.4"/><use href="#cq" x="2306.97" y="-48.4"/><use href="#cq" x="2350.16" y="-48.4"/><use href="#cq" x="2393.35" y="-48.4"/><use href="#cq" x="2436.54" y="-48.4"/><use href="#cq" x="2479.73" y="-48.4"/><use href="#cq" x="2522.92" y="-48.4"/><use href="#cq" x="2566.11" y="-48.4"/><use href="#cq" x="2609.3" y="-48.4"/><use href="#cq" x="2652.49" y="-48.4"/><use href="#cq" x="2695.68" y="-48.4"/><use href="#cq" x="2738.87" y="-48.4"/><use href="#cq" x="-68.48" y="-0.4"/><use href="#cq" x="-25.29" y="-0.4"/><use href="#cq" x="17.9" y="-0.4"/><use href="#cq" x="61.09" y="-0.4"/><use href="#cq" x="104.28" y="-0.4"/><use href="#cq" x="147.47" y="-0.4"/><use href="#cq" x="190.66" y="-0.4"/><use href="#cq" x="233.85" y="-0.4"/><use href="#cq" x="277.04" y="-0.4"/><use href="#cq" x="320.23" y="-0.4"/><use href="#cq" x="363.42" y="-0.4"/><use href="#cq" x="406.61" y="-0.4"/><use href="#cq" x="449.8" y="-0.4"/><use href="#cq" x="492.99" y="-0.4"/><use href="#cq" x="536.18" y="-0.4"/><use href="#cq" x="579.37" y="-0.4"/><use href="#cq" x="622.56" y="-0.4"/><use href="#cq" x="665.75" y="-0.4"/><use href="#cq" x="708.94" y="-0.4"/><use href="#cq" x="752.13" y="-0.4"/><use href="#cq" x="795.32" y="-0.4"/><use href="#cq" x="838.51" y="-0.4"/><use href="#cq" x="881.7" y="-0.4"/><use href="#cq" x="924.89" y="-0.4"/><use href="#cq" x="968.08" y="-0.4"/><use href="#cq" x="1011.27" y="-0.4"/><use href="#cq" x="1054.46" y="-0.4"/><use href="#cq" x="1097.65" y="-0.4"/><use href="#cq" x="1140.84" y="-0.4"/><use href="#cq" x="1184.03" y="-0.4"/><use href="#cq" x="1227.22" y="-0.4"/><use href="#cq" x="1270.41" y="-0.4"/><use href="#cq" x="1313.6" y="-0.4"/><use href="#cq" x="1356.79" y="-0.4"/><use href="#cq" x="1399.98" y="-0.4"/><use href="#cq" x="1443.17" y="-0.4"/><use href="#cq" x="1486.36" y="-0.4"/><use href="#cq" x="1529.55" y="-0.4"/><use href="#cq" x="1572.74" y="-0.4"/><use href="#cq" x="1615.93" y="-0.4"/><use href="#cq" x="1659.12" y="-0.4"/><use href="#cq" x="1702.31" y="-0.4"/><use href="#cq" x="1745.5" y="-0.4"/><use href="#cq" x="1788.69" y="-0.4"/><use href="#cq" x="1831.88" y="-0.4"/><use href="#cq" x="1875.07" y="-0.4"/><use href="#cq" x="1918.26" y="-0.4"/><use href="#cq" x="1961.45" y="-0.4"/><use href="#cq" x="2004.64" y="-0.4"/><use href="#cq" x="2047.83" y="-0.4"/><use href="#cq" x="2091.02" y="-0.4"/><use href="#cq" x="2134.21" y="-0.4"/><use href="#cq" x="2177.4" y="-0.4"/><use href="#cq" x="2220.59" y="-0.4"/><use href="#cq" x="2263.78" y="-0.4"/><use href="#cq" x="2306.97" y="-0.4"/><use href="#cq" x="2350.16" y="-0.4"/><use href="#cq" x="2393.35" y="-0.4"/><use href="#cq" x="2436.54" y="-0.4"/><use href="#cq" x="2479.73" y="-0.4"/><use href="#cq" x="2522.92" y="-0.4"/><use href="#cq" x="2566.11" y="-0.4"/><use href="#cq" x="2609.3" y="-0.4"/><use href="#cq" x="2652.49" y="-0.4"/><use href="#cq" x="2695.68" y="-0.4"/><use href="#cq" x="2738.87" y="-0.4"/><use href="#cq" x="-68.48" y="47.6"/><use href="#cq" x="-25.29" y="47.6"/><use href="#cq" x="17.9" y="47.6"/><use href="#cq" x="61.09" y="47.6"/><use href="#cq" x="104.28" y="47.6"/><use href="#cq" x="147.47" y="47.6"/><use href="#cq" x="190.66" y="47.6"/><use href="#cq" x="233.85" y="47.6"/><use href="#cq" x="277.04" y="47.6"/><use href="#cq" x="320.23" y="47.6"/><use href="#cq" x="363.42" y="47.6"/><use href="#cq" x="406.61" y="47.6"/><use href="#cq" x="449.8" y="47.6"/><use href="#cq" x="492.99" y="47.6"/><use href="#cq" x="536.18" y="47.6"/><use href="#cq" x="579.37" y="47.6"/><use href="#cq" x="622.56" y="47.6"/><use href="#cq" x="665.75" y="47.6"/><use href="#cq" x="708.94" y="47.6"/><use href="#cq" x="752.13" y="47.6"/><use href="#cq" x="795.32" y="47.6"/><use href="#cq" x="838.51" y="47.6"/><use href="#cq" x="881.7" y="47.6"/><use href="#cq" x="924.89" y="47.6"/><use href="#cq" x="968.08" y="47.6"/><use href="#cq" x="1011.27" y="47.6"/><use href="#cq" x="1054.46" y="47.6"/><use href="#cq" x="1097.65" y="47.6"/><use href="#cq" x="1140.84" y="47.6"/><use href="#cq" x="1184.03" y="47.6"/><use href="#cq" x="1227.22" y="47.6"/><use href="#cq" x="1270.41" y="47.6"/><use href="#cq" x="1313.6" y="47.6"/><use href="#cq" x="1356.79" y="47.6"/><use href="#cq" x="1399.98" y="47.6"/><use href="#cq" x="1443.17" y="47.6"/><use href="#cq" x="1486.36" y="47.6"/><use href="#cq" x="1529.55" y="47.6"/><use href="#cq" x="1572.74" y="47.6"/><use href="#cq" x="1615.93" y="47.6"/><use href="#cq" x="1659.12" y="47.6"/><use href="#cq" x="1702.31" y="47.6"/><use href="#cq" x="1745.5" y="47.6"/><use href="#cq" x="1788.69" y="47.6"/><use href="#cq" x="1831.88" y="47.6"/><use href="#cq" x="1875.07" y="47.6"/><use href="#cq" x="1918.26" y="47.6"/><use href="#cq" x="1961.45" y="47.6"/><use href="#cq" x="2004.64" y="47.6"/><use href="#cq" x="2047.83" y="47.6"/><use href="#cq" x="2091.02" y="47.6"/><use href="#cq" x="2134.21" y="47.6"/><use href="#cq" x="2177.4" y="47.6"/><use href="#cq" x="2220.59" y="47.6"/><use href="#cq" x="2263.78" y="47.6"/><use href="#cq" x="2306.97" y="47.6"/><use href="#cq" x="2350.16" y="47.6"/><use href="#cq" x="2393.35" y="47.6"/><use href="#cq" x="2436.54" y="47.6"/><use href="#cq" x="2479.73" y="47.6"/><use href="#cq" x="2522.92" y="47.6"/><use href="#cq" x="2566.11" y="47.6"/><use href="#cq" x="2609.3" y="47.6"/><use href="#cq" x="2652.49" y="47.6"/><use href="#cq" x="2695.68" y="47.6"/><use href="#cq" x="2738.87" y="47.6"/><use href="#cq" x="-68.48" y="95.6"/><use href="#cq" x="-25.29" y="95.6"/><use href="#cq" x="17.9" y="95.6"/><use href="#cq" x="61.09" y="95.6"/><use href="#cq" x="104.28" y="95.6"/><use href="#cq" x="147.47" y="95.6"/><use href="#cq" x="190.66" y="95.6"/><use href="#cq" x="233.85" y="95.6"/><use href="#cq" x="277.04" y="95.6"/><use href="#cq" x="320.23" y="95.6"/><use href="#cq" x="363.42" y="95.6"/><use href="#cq" x="406.61" y="95.6"/><use href="#cq" x="449.8" y="95.6"/><use href="#cq" x="492.99" y="95.6"/><use href="#cq" x="536.18" y="95.6"/><use href="#cq" x="579.37" y="95.6"/><use href="#cq" x="622.56" y="95.6"/><use href="#cq" x="665.75" y="95.6"/><use href="#cq" x="708.94" y="95.6"/><use href="#cq" x="752.13" y="95.6"/><use href="#cq" x="795.32" y="95.6"/><use href="#cq" x="838.51" y="95.6"/><use href="#cq" x="881.7" y="95.6"/><use href="#cq" x="924.89" y="95.6"/><use href="#cq" x="968.08" y="95.6"/><use href="#cq" x="1011.27" y="95.6"/><use href="#cq" x="1054.46" y="95.6"/><use href="#cq" x="1097.65" y="95.6"/><use href="#cq" x="1140.84" y="95.6"/><use href="#cq" x="1184.03" y="95.6"/><use href="#cq" x="1227.22" y="95.6"/><use href="#cq" x="1270.41" y="95.6"/><use href="#cq" x="1313.6" y="95.6"/><use href="#cq" x="1356.79" y="95.6"/><use href="#cq" x="1399.98" y="95.6"/><use href="#cq" x="1443.17" y="95.6"/><use href="#cq" x="1486.36" y="95.6"/><use href="#cq" x="1529.55" y="95.6"/><use href="#cq" x="1572.74" y="95.6"/><use href="#cq" x="1615.93" y="95.6"/><use href="#cq" x="1659.12" y="95.6"/><use href="#cq" x="1702.31" y="95.6"/><use href="#cq" x="1745.5" y="95.6"/><use href="#cq" x="1788.69" y="95.6"/><use href="#cq" x="1831.88" y="95.6"/><use href="#cq" x="1875.07" y="95.6"/><use href="#cq" x="1918.26" y="95.6"/><use href="#cq" x="1961.45" y="95.6"/><use href="#cq" x="2004.64" y="95.6"/><use href="#cq" x="2047.83" y="95.6"/><use href="#cq" x="2091.02" y="95.6"/><use href="#cq" x="2134.21" y="95.6"/><use href="#cq" x="2177.4" y="95.6"/><use href="#cq" x="2220.59" y="95.6"/><use href="#cq" x="2263.78" y="95.6"/><use href="#cq" x="2306.97" y="95.6"/><use href="#cq" x="2350.16" y="95.6"/><use href="#cq" x="2393.35" y="95.6"/><use href="#cq" x="2436.54" y="95.6"/><use href="#cq" x="2479.73" y="95.6"/><use href="#cq" x="2522.92" y="95.6"/><use href="#cq" x="2566.11" y="95.6"/><use href="#cq" x="2609.3" y="95.6"/><use href="#cq" x="2652.49" y="95.6"/><use href="#cq" x="2695.68" y="95.6"/><use href="#cq" x="2738.87" y="95.6"/><use href="#cq" x="-68.48" y="143.6"/><use href="#cq" x="-25.29" y="143.6"/><use href="#cq" x="17.9" y="143.6"/><use href="#cq" x="61.09" y="143.6"/><use href="#cq" x="104.28" y="143.6"/><use href="#cq" x="147.47" y="143.6"/><use href="#cq" x="190.66" y="143.6"/><use href="#cq" x="233.85" y="143.6"/><use href="#cq" x="277.04" y="143.6"/><use href="#cq" x="320.23" y="143.6"/><use href="#cq" x="363.42" y="143.6"/><use href="#cq" x="406.61" y="143.6"/><use href="#cq" x="449.8" y="143.6"/><use href="#cq" x="492.99" y="143.6"/><use href="#cq" x="536.18" y="143.6"/><use href="#cq" x="579.37" y="143.6"/><use href="#cq" x="622.56" y="143.6"/><use href="#cq" x="665.75" y="143.6"/><use href="#cq" x="708.94" y="143.6"/><use href="#cq" x="752.13" y="143.6"/><use href="#cq" x="795.32" y="143.6"/><use href="#cq" x="838.51" y="143.6"/><use href="#cq" x="881.7" y="143.6"/><use href="#cq" x="924.89" y="143.6"/><use href="#cq" x="968.08" y="143.6"/><use href="#cq" x="1011.27" y="143.6"/><use href="#cq" x="1054.46" y="143.6"/><use href="#cq" x="1097.65" y="143.6"/><use href="#cq" x="1140.84" y="143.6"/><use href="#cq" x="1184.03" y="143.6"/><use href="#cq" x="1227.22" y="143.6"/><use href="#cq" x="1270.41" y="143.6"/><use href="#cq" x="1313.6" y="143.6"/><use href="#cq" x="1356.79" y="143.6"/><use href="#cq" x="1399.98" y="143.6"/><use href="#cq" x="1443.17" y="143.6"/><use href="#cq" x="1486.36" y="143.6"/><use href="#cq" x="1529.55" y="143.6"/><use href="#cq" x="1572.74" y="143.6"/><use href="#cq" x="1615.93" y="143.6"/><use href="#cq" x="1659.12" y="143.6"/><use href="#cq" x="1702.31" y="143.6"/><use href="#cq" x="1745.5" y="143.6"/><use href="#cq" x="1788.69" y="143.6"/><use href="#cq" x="1831.88" y="143.6"/><use href="#cq" x="1875.07" y="143.6"/><use href="#cq" x="1918.26" y="143.6"/><use href="#cq" x="1961.45" y="143.6"/><use href="#cq" x="2004.64" y="143.6"/><use href="#cq" x="2047.83" y="143.6"/><use href="#cq" x="2091.02" y="143.6"/><use href="#cq" x="2134.21" y="143.6"/><use href="#cq" x="2177.4" y="143.6"/><use href="#cq" x="2220.59" y="143.6"/><use href="#cq" x="2263.78" y="143.6"/><use href="#cq" x="2306.97" y="143.6"/><use href="#cq" x="2350.16" y="143.6"/><use href="#cq" x="2393.35" y="143.6"/><use href="#cq" x="2436.54" y="143.6"/><use href="#cq" x="2479.73" y="143.6"/><use href="#cq" x="2522.92" y="143.6"/><use href="#cq" x="2566.11" y="143.6"/><use href="#cq" x="2609.3" y="143.6"/><use href="#cq" x="2652.49" y="143.6"/><use href="#cq" x="2695.68" y="143.6"/><use href="#cq" x="2738.87" y="143.6"/></svg>

<div class="a" style="left:20px;top:194px;width:46px;height:46px;border-radius:50%;background:#dbbb3f;border:2px solid #c2a43a;"></div>
<div class="a" style="left:100px;top:196.5px;font-size:16.5px;line-height:16.5px;color:#f2f1ec;letter-spacing:0.7px;-webkit-text-stroke:0.3px #f2f1ec;">JUN 30, 2018</div>
<div class="a" style="left:101.8px;top:221px;font-size:22px;line-height:22px;color:#f2f1ec;letter-spacing:-0.93px;-webkit-text-stroke:0.3px #f2f1ec;">MINOR ISSUES</div>

<div class="a nv" style="left:494.0px;transform:scaleX(0.9548);">Summary</div>
<div class="a nv" style="left:710.0px;transform:scaleX(0.9817);">Highlights</div>
<div class="a nv" style="left:941.0px;transform:scaleX(0.9723);">Team Members</div>
<div class="a nv" style="left:1258.0px;transform:scaleX(0.9568);">Timeline</div>
<div class="a nv" style="left:1458.0px;transform:scaleX(0.9604);">Scope</div>
<div class="a nv" style="left:1621.0px;transform:scaleX(0.9928);">Location</div>
<div class="a nv" style="left:1828.1px;font-weight:bold;letter-spacing:2px;-webkit-text-stroke:0;transform:scaleX(0.9291);">Factors</div>
<div class="a nv" style="left:2014.1px;transform:scaleX(0.9526);">Files + Links</div>
<div class="a" style="left:1828px;top:259px;width:123px;height:8px;background:#c6b052;"></div>

<!-- card -->
<div class="card"></div>

<div class="a" style="left:84px;top:373.8px;font-size:59px;line-height:59px;color:#46525b;letter-spacing:-1.85px;-webkit-text-stroke:1px #fff;">Factor Summary</div>
<div class="a" style="left:83px;top:461px;font-size:27px;line-height:27px;color:#4a565e;letter-spacing:-0.375px;">This table displays the identifier, name, details and comments of twenty-one different factor types of the project.</div>
<div class="a" style="left:1379.5px;top:461px;font-size:27px;line-height:27px;color:#4b9aa6;letter-spacing:-0.775px;">(Show more)</div>

<!-- search -->
<div class="a" style="left:1751px;top:394px;font-size:33px;line-height:33px;color:#6e6e6e;letter-spacing:-1.05px;">Search...</div>
<div class="a" style="left:1704px;top:447px;width:512px;height:2px;background:#cfcfcf;"></div>

<!-- export -->
<div class="a" style="left:2248px;top:363px;width:211px;height:69px;border:2px solid #c9c9c9;border-right:none;border-radius:5px 0 0 5px;"></div>
<div class="a" style="left:2465px;top:363px;width:72px;height:69px;border:2px solid #c9c9c9;border-left:none;border-radius:0 5px 5px 0;"></div>
<div class="a" style="left:2461px;top:363px;width:4px;height:73px;background:#c9c9c9;"></div>
<div class="a" style="left:2326px;top:385.3px;font-size:29px;line-height:29px;color:#333;transform:scaleX(0.87);transform-origin:0 0;">EXPORT</div>
<div class="a" style="left:2555px;top:366px;width:71px;height:71px;border:2px solid #c4c4c4;border-radius:50%;"></div>
<svg class="a" style="left:2570px;top:380px" width="44" height="44" viewBox="2570 380 44 44"><path d="M2585,397.5 C2585,392.5 2588,390.8 2591.7,390.8 C2595.5,390.8 2598.4,393 2598.4,397 C2598.4,401.5 2591.7,402.5 2591.7,406.5 L2591.7,407.5" fill="none" stroke="#606060" stroke-width="3.6" stroke-linecap="round"/><circle cx="2591.5" cy="412.2" r="2.2" fill="#606060"/></svg>

<!-- table header -->
<div class="a hd" style="left:133px;">Factor</div>
<div class="a hd" style="left:632px;">Identifier</div>
<div class="a hd" style="left:932px;">Name</div>
<div class="a hd" style="left:1468px;">Details</div>
<div class="a hd" style="left:2003px;">Comments</div>

<div class="ln" style="top:628px"></div>
<div class="ln" style="top:724px"></div>
<div class="ln" style="top:820px"></div>
<div class="ln" style="top:916px"></div>
<div class="ln" style="top:1012px"></div>
<div class="ln" style="top:1108px"></div>
<div class="ln" style="top:1204px"></div>


<!-- rows -->
<div class="a c" style="left:133px;top:663px;">Target</div>
<div class="a c" style="left:633px;top:663px;">A1</div>
<div class="a c" style="left:933.5px;top:633px;">Coral Reefs</div>
<div class="a c" style="left:1469.5px;top:633px;">Eastern Village Bay has extensive<br>coral reef areas</div>
<div class="a c" style="left:133px;top:759px;">Target</div>
<div class="a c" style="left:633px;top:759px;">A2</div>
<div class="a c" style="left:933.5px;top:729px;">Coral Reefs</div>
<div class="a c" style="left:133px;top:855px;">Target</div>
<div class="a c" style="left:633px;top:855px;">B</div>
<div class="a c" style="left:933.5px;top:825px;">Sharks</div>
<div class="a c" style="left:1469.5px;top:825px;">There are two main shark species<br>that either live or feed in the Bay.</div>
<div class="a c" style="left:133px;top:951px;">Target</div>
<div class="a c" style="left:633px;top:951px;">C</div>
<div class="a c" style="left:933.5px;top:921px;">Seagrass Beds</div>
<div class="a c" style="left:133px;top:1047px;">Target</div>
<div class="a c" style="left:633px;top:1047px;">D</div>
<div class="a c" style="left:933.5px;top:1017px;">Mangroves</div>
<div class="a c" style="left:1469.5px;top:1017px;">There is extensive mangrove forest<br>along the shores of the Bay.</div>
<div class="a c" style="left:133px;top:1143px;">Target</div>
<div class="a c" style="left:633px;top:1143px;">E</div>
<div class="a c" style="left:933.5px;top:1113px;">Seabirds</div>
<div class="a c" style="left:1469.5px;top:1113px;">There are three main species of<br>seabirds that breed on the small<br>islands in the Bay.</div>


<!-- header filter icon -->
<div class="a" style="left:227px;top:563px;width:27px;height:3px;background:#111;"></div>
<div class="a" style="left:231px;top:570px;width:18px;height:3px;background:#111;"></div>
<div class="a" style="left:237px;top:578px;width:6px;height:3px;background:#111;"></div>

<!-- sidebar -->
<svg class="a" style="left:2517px;top:618px" width="26" height="25" viewBox="0 0 26 25" fill="#000">
<rect x="0.5" y="0" width="6" height="6"/><rect x="9.5" y="0" width="6" height="6"/><rect x="18.5" y="0" width="6" height="6"/>
<rect x="0.5" y="9" width="6" height="6"/><rect x="9.5" y="9" width="6" height="6"/><rect x="18.5" y="9" width="6" height="6"/>
<rect x="0.5" y="18" width="6" height="6"/><rect x="9.5" y="18" width="6" height="6"/><rect x="18.5" y="18" width="6" height="6"/>
</svg>
<div class="a c" style="left:2544px;top:653px;transform:rotate(90deg);transform-origin:0 0;">Columns</div>
<div class="a" style="left:2516px;top:847px;width:28px;height:3px;background:#000;"></div>
<div class="a" style="left:2521px;top:854px;width:18px;height:3.5px;background:#000;"></div>
<div class="a" style="left:2527px;top:862px;width:6px;height:3px;background:#000;"></div>
<div class="a c" style="left:2543px;top:880px;transform:rotate(90deg);transform-origin:0 0;">Filters</div>

<!-- search icon -->
<svg class="a" style="left:1700px;top:390px" width="46" height="46" viewBox="0 0 46 46" fill="none" stroke="#46525b">
<circle cx="19" cy="17.75" r="11.2" stroke-width="3.8"/>
<line x1="27.5" y1="26.3" x2="39.2" y2="38.3" stroke-width="4.4" stroke-linecap="butt"/>
</svg>

<!-- export icon -->
<svg class="a" style="left:2276px;top:380px" width="40" height="40" viewBox="0 0 40 40">
<rect x="6.3" y="25" width="27.3" height="8.2" rx="4.1" fill="#2f2f2f"/>
<polyline points="13,17.5 20,24.8 27,17.5" fill="none" stroke="#fff" stroke-width="8" stroke-linecap="round" stroke-linejoin="round"/>
<line x1="20" y1="6" x2="20" y2="24" stroke="#2f2f2f" stroke-width="3.6" stroke-linecap="round"/>
<polyline points="13,17.5 20,24.6 27,17.5" fill="none" stroke="#2f2f2f" stroke-width="3.6" stroke-linecap="round" stroke-linejoin="round"/>
<circle cx="29.6" cy="29.1" r="1.5" fill="#fff"/>
</svg>
<svg class="a" style="left:2480px;top:385px" width="42" height="30" viewBox="0 0 42 30" fill="none" stroke="#2b2b2b" stroke-width="4.5" stroke-linecap="round" stroke-linejoin="round">
<polyline points="8,8 21,21 34,8"/>
</svg>

</body></html>
